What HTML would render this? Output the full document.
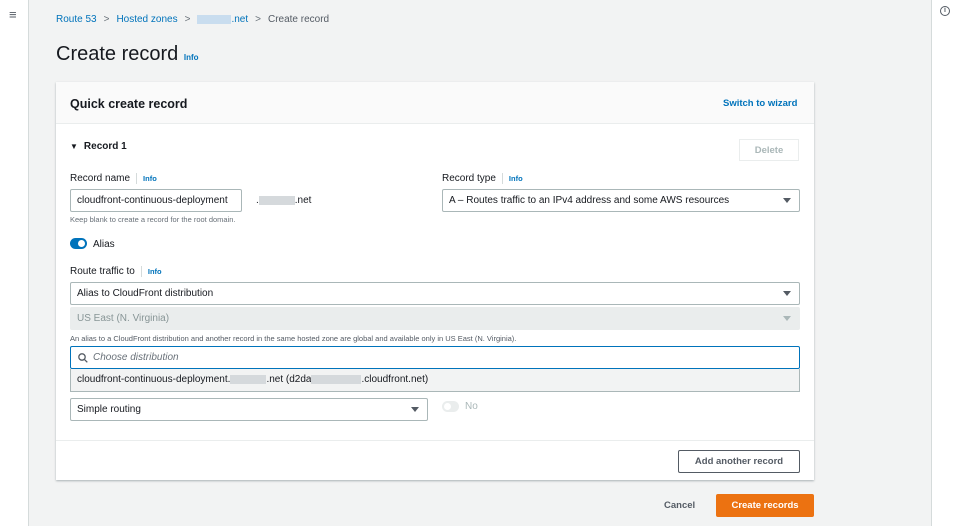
<!DOCTYPE html><html><head><style>
*{box-sizing:border-box;margin:0;padding:0}
body{width:960px;height:526px;overflow:hidden;background:#f2f3f3;font-family:"Liberation Sans",sans-serif;color:#16191f;font-size:10px;position:relative}
.a{position:absolute;white-space:nowrap}
.lnk{color:#0073bb}
.info{color:#0073bb;font-weight:bold;font-size:7.5px}
.inp{position:absolute;background:#fff;border:1px solid #aab7b8;border-radius:2px;height:23px;padding:0 6px;line-height:22px;font-size:10px}
.tri{position:absolute;right:8px;top:8px;width:0;height:0;border-left:4px solid transparent;border-right:4px solid transparent;border-top:5px solid #545b64}
.lbl{font-size:10px;color:#16191f}
.sep{display:inline-block;width:1px;height:11px;background:#d5dbdb;vertical-align:middle;margin:0 6px}
.blur{display:inline-block;background:#d5d9dc;height:9px;vertical-align:middle}
</style></head><body>
<div class="a" style="left:0;top:0;width:29px;height:526px;background:#fff;border-right:1px solid #d5dbdb"></div>
<div class="a" style="left:9px;top:7px;font-size:13px;color:#545b64">≡</div>
<div class="a" style="left:931px;top:0;width:29px;height:526px;background:#fff;border-left:1px solid #d5dbdb"></div>
<div class="a" style="left:940px;top:6px;width:10px;height:10px;border:1.3px solid #545b64;border-radius:50%;font-size:7px;line-height:7px;text-align:center;font-weight:bold;color:#545b64">i</div>

<div class="a" style="left:56px;top:14px;font-size:10px;line-height:12px"><span class="lnk">Route 53</span><span style="color:#687078;margin:0 7px">&gt;</span><span class="lnk">Hosted zones</span><span style="color:#687078;margin:0 7px">&gt;</span><span class="blur" style="width:34px;background:#c9ddef"></span><span class="lnk">.net</span><span style="color:#687078;margin:0 7px">&gt;</span><span style="color:#545b64">Create record</span></div>
<div class="a" style="left:56px;top:43px;font-size:20px">Create record <span class="info" style="font-size:8px">Info</span></div>

<div class="a" style="left:56px;top:82px;width:758px;height:398px;background:#fff;box-shadow:0 1px 2px rgba(0,28,36,.3)"></div>
<div class="a" style="left:56px;top:82px;width:758px;height:42px;background:#fafafa;border-bottom:1px solid #eaeded"></div>
<div class="a" style="left:70px;top:97px;font-size:12.5px;font-weight:bold">Quick create record</div>
<div class="a" style="left:723px;top:98px;font-size:9.5px;font-weight:bold;color:#0073bb">Switch to wizard</div>

<div class="a" style="left:70px;top:141px;font-size:10px;font-weight:bold"><span style="font-size:8px;margin-right:6px">▼</span>Record 1</div>
<div class="a" style="left:739px;top:139px;width:60px;height:22px;border:1px solid #eaeded;color:#aab7b8;font-weight:bold;font-size:9.5px;text-align:center;line-height:21px">Delete</div>

<div class="a lbl" style="left:70px;top:173px">Record name<span class="sep"></span><span class="info">Info</span></div>
<div class="inp" style="left:70px;top:189px;width:172px">cloudfront-continuous-deployment</div>
<div class="a" style="left:256px;top:195px">.<span class="blur" style="width:36px"></span>.net</div>
<div class="a" style="left:70px;top:215px;font-size:7.5px;color:#687078">Keep blank to create a record for the root domain.</div>

<div class="a lbl" style="left:442px;top:173px">Record type<span class="sep"></span><span class="info">Info</span></div>
<div class="inp" style="left:442px;top:189px;width:358px">A – Routes traffic to an IPv4 address and some AWS resources<div class="tri"></div></div>

<div class="a" style="left:70px;top:238px;width:17px;height:11px;border-radius:6px;background:#0073bb"><div style="position:absolute;right:2px;top:2px;width:7px;height:7px;border-radius:50%;background:#fff"></div></div>
<div class="a" style="left:93px;top:239px">Alias</div>

<div class="a lbl" style="left:70px;top:266px">Route traffic to<span class="sep"></span><span class="info">Info</span></div>
<div class="inp" style="left:70px;top:282px;width:730px">Alias to CloudFront distribution<div class="tri"></div></div>
<div class="inp" style="left:70px;top:307px;width:730px;background:#eaeded;border-color:#eaeded;color:#879596">US East (N. Virginia)<div class="tri" style="border-top-color:#aab7b8"></div></div>
<div class="a" style="left:70px;top:334px;font-size:7.5px;color:#545b64">An alias to a CloudFront distribution and another record in the same hosted zone are global and available only in US East (N. Virginia).</div>

<div class="inp" style="left:70px;top:346px;width:730px;border-color:#0073bb;color:#687078;font-style:italic;padding-left:22px"><svg style="position:absolute;left:7px;top:6px" width="10" height="10" viewBox="0 0 10 10"><circle cx="4" cy="4" r="3.2" fill="none" stroke="#545b64" stroke-width="1.3"/><path d="M6.4 6.4L9.3 9.3" stroke="#545b64" stroke-width="1.3"/></svg>Choose distribution</div>
<div class="a" style="left:70px;top:369px;width:730px;height:23px;background:#f2f3f3;border:1px solid #aab7b8;border-top:none;padding-left:6px;line-height:22px">cloudfront-continuous-deployment.<span class="blur" style="width:36px"></span>.net (d2da<span class="blur" style="width:50px"></span>.cloudfront.net)</div>

<div class="inp" style="left:70px;top:398px;width:358px">Simple routing<div class="tri"></div></div>
<div class="a" style="left:442px;top:401px;width:17px;height:11px;border-radius:6px;background:#eaeded"><div style="position:absolute;left:2px;top:2px;width:7px;height:7px;border-radius:50%;background:#fff"></div></div>
<div class="a" style="left:465px;top:401px;color:#aab7b8">No</div>

<div class="a" style="left:56px;top:440px;width:758px;height:1px;background:#eaeded"></div>
<div class="a" style="left:678px;top:450px;width:122px;height:23px;border:1px solid #545b64;border-radius:2px;font-weight:bold;font-size:9.5px;text-align:center;line-height:21px;color:#545b64">Add another record</div>

<div class="a" style="left:664px;top:500px;font-weight:bold;font-size:9.5px;color:#545b64">Cancel</div>
<div class="a" style="left:716px;top:494px;width:98px;height:23px;background:#ec7211;border-radius:2px;color:#fff;font-weight:bold;font-size:9.5px;text-align:center;line-height:23px">Create records</div>
</body></html>
